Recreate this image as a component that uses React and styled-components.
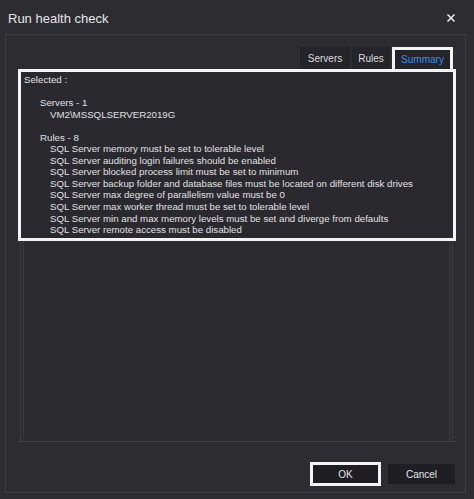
import React from "react";
import styled, { createGlobalStyle } from "styled-components";

const GlobalStyle = createGlobalStyle`
  html, body {
    margin: 0;
    padding: 0;
    background: #2d2c31;
  }
  body {
    font-family: "Liberation Sans", Arial, sans-serif;
    color: #e2e2e4;
  }
`;

const Window = styled.div`
  width: 474px;
  height: 499px;
  background: #2d2c31;
  display: flex;
  flex-direction: column;
  box-sizing: border-box;
`;

const TitleBar = styled.div`
  height: 34px;
  display: flex;
  align-items: center;
  justify-content: space-between;
  padding: 0 18px 0 8px;
  flex-shrink: 0;
`;

const Title = styled.span`
  font-size: 13px;
  color: #e6e6e8;
  margin-top: 2px;
`;

const CloseButton = styled.button`
  border: 0;
  background: none;
  padding: 0;
  width: 10px;
  height: 10px;
  margin-top: 1px;
  display: flex;
  align-items: center;
  justify-content: center;
  cursor: pointer;
`;

const Frame = styled.div`
  flex: 1;
  margin: 0 8px 6px 5px;
  border: 1px solid #3d3c42;
  display: flex;
  flex-direction: column;
  box-sizing: border-box;
`;

const TabStrip = styled.div`
  display: flex;
  justify-content: flex-end;
  gap: 2px;
  padding: 12px 12px 0 0;
  height: 22px;
`;

const Tab = styled.button`
  font-family: inherit;
  font-size: 10px;
  width: ${(p) => p.$w}px;
  height: 22px;
  padding: 0;
  background: #252429;
  color: ${(p) => (p.$active ? "#3c8ee8" : "#dcdcde")};
  border: ${(p) => (p.$active ? "3px solid #f4f4f4" : "0")};
  border-bottom: 0;
  box-sizing: border-box;
  cursor: pointer;
`;

const TabPanel = styled.div`
  height: 372px;
  margin: 0 9px 0 12px;
  display: flex;
  flex-direction: column;
  border-bottom: 1px solid #3f3e44;
  box-shadow: inset 0 -3px 0 #2d2c31, inset 0 -4px 0 #3a3940;
`;

const SummaryBox = styled.div`
  height: 172px;
  box-sizing: border-box;
  border: 3px solid #f4f4f4;
  background: #2a292e;
  padding: 2px 0 0 3px;
  font-size: 9.7px;
  line-height: 11.55px;
  color: #e0e0e1;
  flex-shrink: 0;
`;

const EmptyArea = styled.div`
  flex: 1;
  margin: 0 3px 0 2px;
  border-left: 1px solid #3a3940;
  border-right: 1px solid #3a3940;
  box-shadow: inset 2px 0 0 #2d2c31, inset 3px 0 0 #38373d, inset -2px 0 0 #2d2c31, inset -3px 0 0 #38373d;
  background: #2c2b30;
`;

const Line = styled.div`
  padding-left: ${(p) => p.$indent || 0}px;
  min-height: 11.55px;
  white-space: nowrap;
`;

const Footer = styled.div`
  display: flex;
  justify-content: flex-end;
  align-items: center;
  gap: 7px;
  padding: 20px 10px 0 0;
`;

const Button = styled.button`
  font-family: inherit;
  font-size: 10px;
  color: #e4e4e6;
  background: #1f1e23;
  width: ${(p) => (p.$primary ? 71 : 67)}px;
  height: ${(p) => (p.$primary ? 24 : 20)}px;
  border: ${(p) => (p.$primary ? "3px solid #f4f4f4" : "1px solid #1f1e23")};
  box-sizing: border-box;
  padding: 0;
  cursor: pointer;
`;

const rules = [
  "SQL Server memory must be set to tolerable level",
  "SQL Server auditing login failures should be enabled",
  "SQL Server blocked process limit must be set to minimum",
  "SQL Server backup folder and database files must be located on different disk drives",
  "SQL Server max degree of parallelism value must be 0",
  "SQL Server max worker thread must be set to tolerable level",
  "SQL Server min and max memory levels must be set and diverge from defaults",
  "SQL Server remote access must be disabled",
];

export default function App() {
  return (
    <>
      <GlobalStyle />
      <Window>
        <TitleBar>
          <Title>Run health check</Title>
          <CloseButton aria-label="Close">
            <svg width="8" height="8" viewBox="0 0 8 8">
              <path d="M0.5 0.5L7.5 7.5M7.5 0.5L0.5 7.5" stroke="#f0f0f0" strokeWidth="1.5" />
            </svg>
          </CloseButton>
        </TitleBar>
        <Frame>
          <TabStrip>
            <Tab $w={50}>Servers</Tab>
            <Tab $w={38}>Rules</Tab>
            <Tab $w={61} $active>
              Summary
            </Tab>
          </TabStrip>
          <TabPanel>
            <SummaryBox>
              <Line>Selected :</Line>
              <Line />
              <Line $indent={16}>Servers - 1</Line>
              <Line $indent={26}>VM2\MSSQLSERVER2019G</Line>
              <Line />
              <Line $indent={16}>Rules - 8</Line>
              {rules.map((r) => (
                <Line key={r} $indent={26}>
                  {r}
                </Line>
              ))}
            </SummaryBox>
            <EmptyArea />
          </TabPanel>
          <Footer>
            <Button $primary>OK</Button>
            <Button>Cancel</Button>
          </Footer>
        </Frame>
      </Window>
    </>
  );
}
